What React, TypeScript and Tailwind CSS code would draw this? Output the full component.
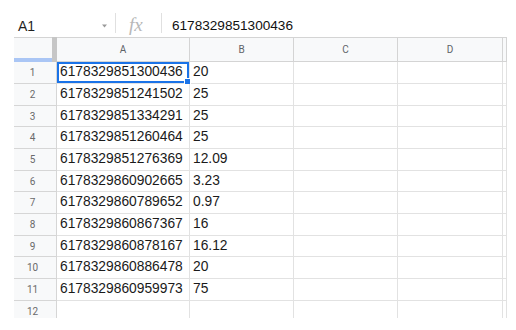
import React from "react";

const rows: { n: number; a: string; b: string; h: string }[] = [
  { n: 1, a: "6178329851300436", b: "20", h: "h-[22px]" },
  { n: 2, a: "6178329851241502", b: "25", h: "h-[22px]" },
  { n: 3, a: "6178329851334291", b: "25", h: "h-[21px]" },
  { n: 4, a: "6178329851260464", b: "25", h: "h-[22px]" },
  { n: 5, a: "6178329851276369", b: "12.09", h: "h-[22px]" },
  { n: 6, a: "6178329860902665", b: "3.23", h: "h-[21px]" },
  { n: 7, a: "6178329860789652", b: "0.97", h: "h-[22px]" },
  { n: 8, a: "6178329860867367", b: "16", h: "h-[22px]" },
  { n: 9, a: "6178329860878167", b: "16.12", h: "h-[21px]" },
  { n: 10, a: "6178329860886478", b: "20", h: "h-[22px]" },
  { n: 11, a: "6178329860959973", b: "75", h: "h-[22px]" },
  { n: 12, a: "", b: "", h: "h-[21px]" },
];

function FormulaBar() {
  return (
    <div className="h-[37px] flex items-center pt-[14px] pl-[18px] font-['Liberation_Sans',Arial,sans-serif]">
      <span className="w-[84px] text-[14px] text-[#1f1f1f] leading-none">A1</span>
      <svg width="5" height="4" viewBox="0 0 5 4" className="mt-[1px]">
        <path d="M0 0.5 L5 0.5 L2.5 3.5 Z" fill="#9a9a9a" />
      </svg>
      <div className="ml-[8px] w-px h-[20px] mb-[6px] bg-[#e0e0e0]" />
      <span className="ml-[13px] w-[20px] text-[19px] italic text-[#b8b8b8] leading-none font-['Liberation_Serif',serif] -mt-[3px]">
        fx
      </span>
      <div className="ml-[12px] w-px h-[20px] mb-[6px] bg-[#e0e0e0]" />
      <span className="ml-[10px] text-[13.6px] text-[#111] leading-none">6178329851300436</span>
    </div>
  );
}

function HeaderRow() {
  const cols = [
    { l: "A", w: "w-[133px]" },
    { l: "B", w: "w-[104px]" },
    { l: "C", w: "w-[104px]" },
    { l: "D", w: "w-[105px]" },
    { l: "", w: "w-[4px]" },
  ];
  return (
    <div className="flex h-[25px]">
      <div className="flex w-[43px] h-[25px] shrink-0">
        <div className="w-[38px] flex flex-col">
          <div className="h-[21px] bg-[#f8f9fa] border-t border-[#d4d4d4]" />
          <div className="h-[4px] bg-[#aac6f5]" />
        </div>
        <div className="w-[5px] bg-[#c6c6c6]" />
      </div>
      {cols.map((c, i) => (
        <div
          key={i}
          className={`${c.w} shrink-0 h-[25px] bg-[#f8f9fa] border-t border-b border-r border-[#d4d4d4] flex items-center justify-center text-[10px] text-[#5f6368] font-['Roboto',Arial,sans-serif]`}
        >
          {c.l}
        </div>
      ))}
    </div>
  );
}

function DataRow({ r }: { r: (typeof rows)[number] }) {
  const cell = "shrink-0 border-b border-r border-[#e2e2e2] h-full";
  return (
    <div className={`flex ${r.h}`}>
      <div
        className={`w-[43px] shrink-0 h-full bg-[#f8f9fa] border-b border-r border-[#d6d6d6] flex items-center justify-center pr-[5px] text-[10px] text-[#6a6a6a] font-['Roboto',Arial,sans-serif]`}
      >
        {r.n}
      </div>
      <div className={`${cell} w-[133px] relative flex items-center pl-[3px] text-[13.8px] text-[#1a1a1a]`}>
        {r.a}
        {r.n === 1 && (
          <div className="absolute left-0 top-0 right-0 bottom-0 border-2 border-[#1a73e8]">
            <div className="absolute -right-[4px] -bottom-[4px] w-[7px] h-[7px] bg-[#1a73e8] border border-white" />
          </div>
        )}
      </div>
      <div className={`${cell} w-[104px] flex items-center pl-[3px] text-[13.8px] text-[#1a1a1a]`}>{r.b}</div>
      <div className={`${cell} w-[104px]`} />
      <div className={`${cell} w-[105px]`} />
      <div className={`${cell} w-[4px]`} />
    </div>
  );
}

export default function App() {
  return (
    <div className="w-[516px] h-[330px] bg-white overflow-hidden font-['Liberation_Sans',Arial,sans-serif]">
      <FormulaBar />
      <div className="ml-[14px] w-[493px] h-[281px] overflow-hidden">
        <HeaderRow />
        {rows.map((r) => (
          <DataRow key={r.n} r={r} />
        ))}
      </div>
    </div>
  );
}
